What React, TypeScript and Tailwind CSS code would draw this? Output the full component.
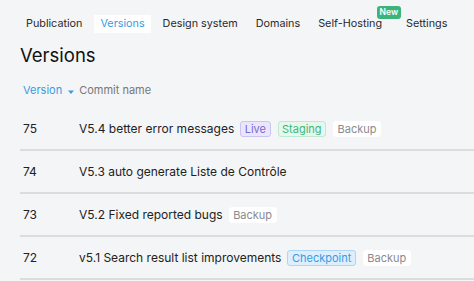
import React from "react";

type Tag = "Live" | "Staging" | "Backup" | "Checkpoint";

const TAG_STYLES: Record<Tag, string> = {
  Live: "border-[#cbc3f2] bg-[#ebe7fb] text-[#7a68d6]",
  Staging: "border-[#bfe9d2] bg-[#e6f7ee] text-[#3db77c]",
  Backup: "border-white bg-white text-[#8a8a8f]",
  Checkpoint: "border-[#acd6f5] bg-[#ddeffd] text-[#3a9be0]",
};

const TABS = ["Publication", "Versions", "Design system", "Domains", "Self-Hosting", "Settings"];

const ROWS: { version: number; name: string; tags: Tag[] }[] = [
  { version: 75, name: "V5.4 better error messages", tags: ["Live", "Staging", "Backup"] },
  { version: 74, name: "V5.3 auto generate Liste de Contrôle", tags: [] },
  { version: 73, name: "V5.2 Fixed reported bugs", tags: ["Backup"] },
  { version: 72, name: "v5.1 Search result list improvements", tags: ["Checkpoint", "Backup"] },
];

export default function App() {
  return (
    <div
      className="h-[281px] w-[474px] overflow-hidden bg-[#f4f5f7] text-[#222]"
      style={{ fontFamily: "Inter, 'Noto Sans', sans-serif" }}
    >
      <nav className="flex items-center gap-[6px] whitespace-nowrap pl-[20px] pt-[15px] text-[10.8px]">
        {TABS.map((t) => (
          <div
            key={t}
            className={
              "relative flex h-[18px] shrink-0 items-center px-[6px] " +
              (t === "Versions" ? "bg-white text-[#3a9be0]" : "text-[#2a2a2a]") +
              (t === "Self-Hosting" ? " mr-[6px]" : "")
            }
          >
            {t}
            {t === "Self-Hosting" && (
              <span className="absolute right-[-13px] top-[-9px] rounded-[3px] bg-[#3bb47b] px-[3px] py-[1px] text-[8.5px] font-semibold leading-[11px] text-white">
                New
              </span>
            )}
          </div>
        ))}
      </nav>

      <h1 className="mt-[10px] pl-[20px] text-[18.5px] leading-[24px] text-[#111]">Versions</h1>

      <div className="mt-[16px] flex items-center pl-[23px] text-[11px] leading-[14px]">
        <span className="text-[#3a9be0]">Version</span>
        <svg width="8" height="6" viewBox="0 0 8 6" className="ml-[5px] mr-[4px] mt-[3px]">
          <path d="M1 1.5h6L4 5z" fill="#3a9be0" />
        </svg>
        <span className="text-[#777]">Commit name</span>
      </div>

      <div className="mt-[11px] pl-[20px]">
        {ROWS.map((r) => (
          <div
            key={r.version}
            className="flex h-[43px] items-center whitespace-nowrap border-b-2 border-[#dcdcdf] text-[12px]"
          >
            <span className="w-[59px] pl-[3px] text-[#222]">{r.version}</span>
            <span className="text-[#222]">{r.name}</span>
            <div className="ml-[6px] flex items-center gap-[7px]">
              {r.tags.map((tg) => (
                <span
                  key={tg}
                  className={"rounded-[3px] border px-[3.5px] text-[11px] leading-[14px] " + TAG_STYLES[tg]}
                >
                  {tg}
                </span>
              ))}
            </div>
          </div>
        ))}
      </div>
    </div>
  );
}
